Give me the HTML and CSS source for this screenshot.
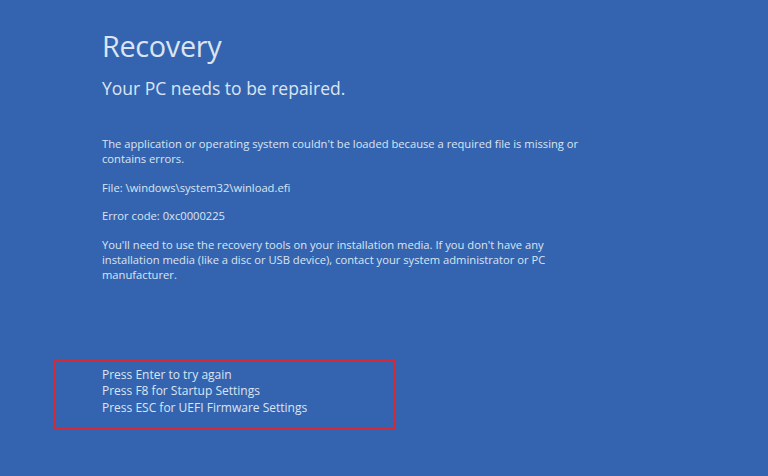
FILE: index.html
```html
<!DOCTYPE html>
<html>
<head>
<meta charset="utf-8">
<link rel="stylesheet" href="styles.css">
</head>
<body>
<main class="screen">
  <h1 class="title">Recovery</h1>
  <h2 class="subtitle">Your PC needs to be repaired.</h2>
  <p class="msg">The application or operating system couldn't be loaded because a required file is missing or contains errors.</p>
  <p class="msg">File: \windows\system32\winload.efi</p>
  <p class="msg">Error code: 0xc0000225</p>
  <p class="msg">You'll need to use the recovery tools on your installation media. If you don't have any installation media (like a disc or USB device), contact your system administrator or PC manufacturer.</p>
  <div class="keys">
    <div>Press Enter to try again</div>
    <div>Press F8 for Startup Settings</div>
    <div>Press ESC for UEFI Firmware Settings</div>
  </div>
</main>
</body>
</html>
```
FILE: styles.css
```css
html, body {
  margin: 0;
  padding: 0;
  background: #3464b0;
  width: 768px;
  height: 476px;
  overflow: hidden;
}
.screen {
  font-family: "Open Sans", "Noto Sans", sans-serif;
  color: #dbe4f2;
  padding: 26px 0 0 102px;
  box-sizing: border-box;
  height: 476px;
}
.title {
  margin: 0 0 8px;
  font-weight: 400;
  font-size: 28.8px;
  line-height: 40px;
  letter-spacing: -0.3px;
}
.subtitle {
  margin: 0 0 34px;
  font-weight: 400;
  font-size: 17.5px;
  line-height: 28px;
}
.msg {
  margin: 0 0 13.5px;
  font-size: 11.2px;
  line-height: 15px;
  width: 500px;
}
.keys {
  margin: 77px 0 0 -48px;
  width: 292px;
  padding: 6px 0 12px 46px;
  border: 2px solid #d42a35;
  border-radius: 2px;
  font-size: 12px;
  line-height: 16.5px;
}
```
